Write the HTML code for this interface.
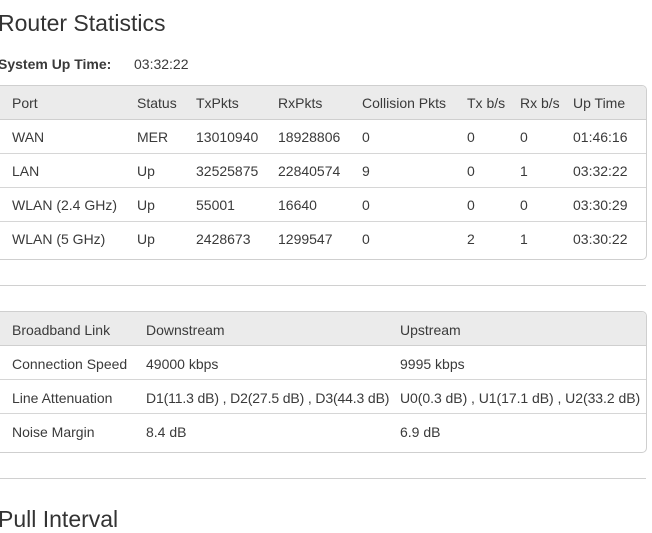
<!DOCTYPE html>
<html><head><style>
body{margin:0;width:652px;height:510px;overflow:hidden;background:#fff;font-family:"Liberation Sans",sans-serif;color:#3a3a3a;position:relative}
.a{position:absolute;white-space:nowrap;font-size:14px;line-height:16px}
.box{position:absolute;left:-6px;width:651px;border:1px solid #cfcfcf;border-radius:5px;overflow:hidden}
.hd{position:absolute;left:0;right:0;top:0;height:33px;background:#ebebeb;border-bottom:1px solid #cfcfcf}
.ln{position:absolute;left:0;right:0;height:1px;background:#d6d6d6}
.hr{position:absolute;left:0;width:646px;height:1px;background:#d0d0d0}
</style></head><body>
<div class="a" style="left:-2px;top:9px;font-size:23px;line-height:28px;color:#333">Router Statistics</div>
<div class="a" style="left:-2px;top:56px;font-weight:bold">System Up Time:</div>
<div class="a" style="left:134px;top:56px">03:32:22</div>

<div class="box" style="top:85px;height:173px">
<div class="hd"></div>
<div class="ln" style="top:67px"></div>
<div class="ln" style="top:101px"></div>
<div class="ln" style="top:135px"></div>
</div>
<div class="a" style="left:12px;top:95px">Port</div><div class="a" style="left:137px;top:95px">Status</div><div class="a" style="left:196px;top:95px">TxPkts</div><div class="a" style="left:278px;top:95px">RxPkts</div><div class="a" style="left:362px;top:95px">Collision Pkts</div><div class="a" style="left:467px;top:95px">Tx b/s</div><div class="a" style="left:520px;top:95px">Rx b/s</div><div class="a" style="left:573px;top:95px">Up Time</div>

<div class="a" style="left:12px;top:129px">WAN</div><div class="a" style="left:137px;top:129px">MER</div><div class="a" style="left:196px;top:129px">13010940</div><div class="a" style="left:278px;top:129px">18928806</div><div class="a" style="left:362px;top:129px">0</div><div class="a" style="left:467px;top:129px">0</div><div class="a" style="left:520px;top:129px">0</div><div class="a" style="left:573px;top:129px">01:46:16</div>

<div class="a" style="left:12px;top:163px">LAN</div><div class="a" style="left:137px;top:163px">Up</div><div class="a" style="left:196px;top:163px">32525875</div><div class="a" style="left:278px;top:163px">22840574</div><div class="a" style="left:362px;top:163px">9</div><div class="a" style="left:467px;top:163px">0</div><div class="a" style="left:520px;top:163px">1</div><div class="a" style="left:573px;top:163px">03:32:22</div>

<div class="a" style="left:12px;top:197px">WLAN (2.4 GHz)</div><div class="a" style="left:137px;top:197px">Up</div><div class="a" style="left:196px;top:197px">55001</div><div class="a" style="left:278px;top:197px">16640</div><div class="a" style="left:362px;top:197px">0</div><div class="a" style="left:467px;top:197px">0</div><div class="a" style="left:520px;top:197px">0</div><div class="a" style="left:573px;top:197px">03:30:29</div>

<div class="a" style="left:12px;top:231px">WLAN (5 GHz)</div><div class="a" style="left:137px;top:231px">Up</div><div class="a" style="left:196px;top:231px">2428673</div><div class="a" style="left:278px;top:231px">1299547</div><div class="a" style="left:362px;top:231px">0</div><div class="a" style="left:467px;top:231px">2</div><div class="a" style="left:520px;top:231px">1</div><div class="a" style="left:573px;top:231px">03:30:22</div>

<div class="hr" style="top:285px"></div>

<div class="box" style="top:311px;height:140px">
<div class="hd"></div>
<div class="ln" style="top:67px"></div>
<div class="ln" style="top:101px"></div>
</div>
<div class="a" style="left:12px;top:322px">Broadband Link</div><div class="a" style="left:146px;top:322px">Downstream</div><div class="a" style="left:400px;top:322px">Upstream</div>
<div class="a" style="left:12px;top:356px">Connection Speed</div><div class="a" style="left:146px;top:356px">49000 kbps</div><div class="a" style="left:400px;top:356px">9995 kbps</div>
<div class="a" style="left:12px;top:390px">Line Attenuation</div><div class="a" style="left:146px;top:390px;letter-spacing:-0.14px">D1(11.3 dB) , D2(27.5 dB) , D3(44.3 dB)</div><div class="a" style="left:400px;top:390px;letter-spacing:-0.05px">U0(0.3 dB) , U1(17.1 dB) , U2(33.2 dB)</div>
<div class="a" style="left:12px;top:424px">Noise Margin</div><div class="a" style="left:146px;top:424px">8.4 dB</div><div class="a" style="left:400px;top:424px">6.9 dB</div>

<div class="hr" style="top:478px"></div>
<div class="a" style="left:-2px;top:499px;font-size:23px;line-height:28px;color:#333;transform:translateY(6px)">Pull Interval</div>
</body></html>
